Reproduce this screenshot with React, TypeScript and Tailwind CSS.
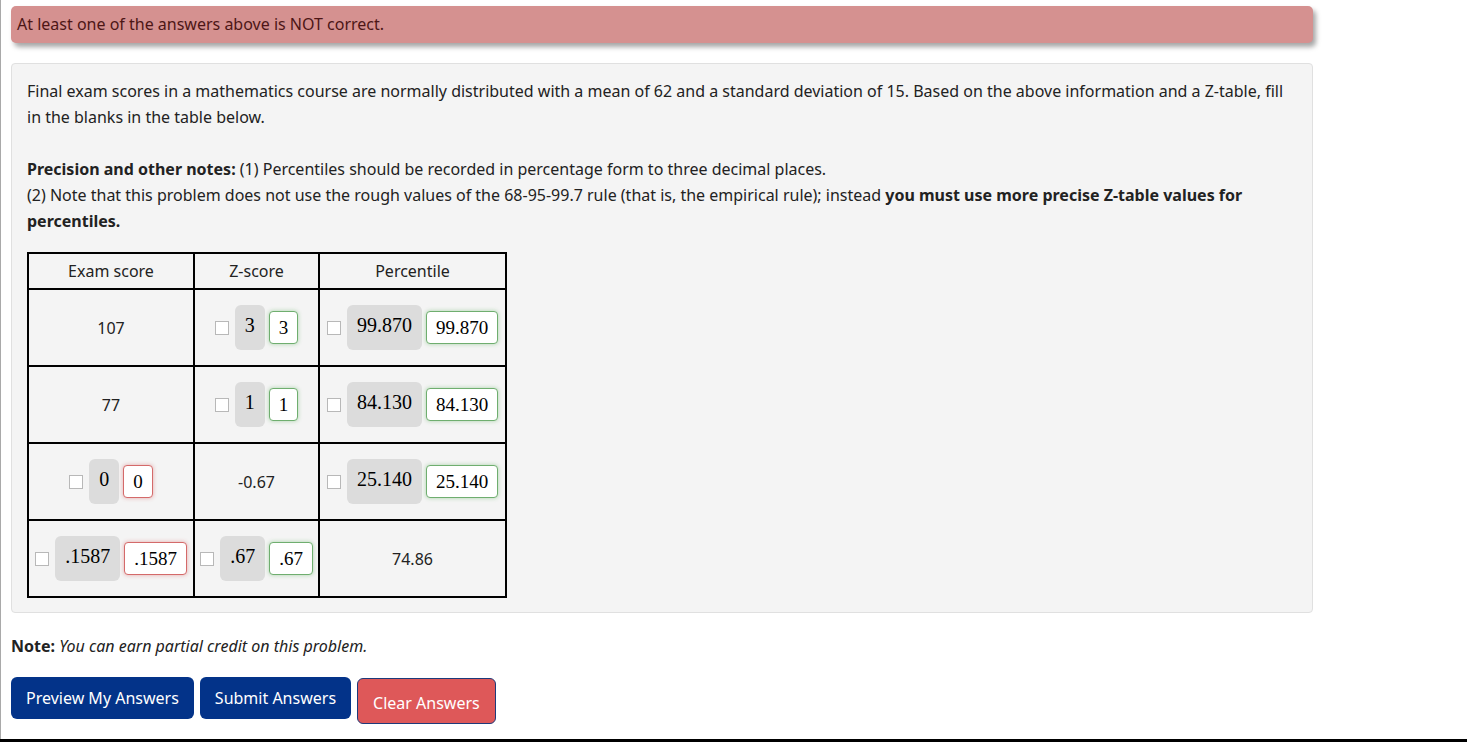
import React from "react";

const Check = () => (
  <span className="inline-block w-[14px] h-[14px] border border-[#b8b8b8] bg-white shrink-0" />
);

const Math = ({ v }: { v: string }) => (
  <span className="inline-flex items-center justify-center h-[45px] px-[10px] rounded-[6px] bg-[#dcdcdc] text-[20px] leading-none text-black pb-[6px] [font-family:'Liberation_Serif',serif]">
    {v}
  </span>
);

const Input = ({ v, ok }: { v: string; ok: boolean }) => (
  <span
    className={
      "inline-flex items-center justify-center h-[33px] px-[9px] rounded-[4px] bg-white text-[19px] leading-none text-black [font-family:'Liberation_Serif',serif] border " +
      (ok
        ? "border-[#6fae6f] shadow-[0_0_4px_rgba(80,170,80,0.45)]"
        : "border-[#d46a6a] shadow-[0_0_4px_rgba(210,80,80,0.45)]")
    }
  >
    {v}
  </span>
);

const Ans = ({ v, ok }: { v: string; ok: boolean }) => (
  <div className="flex items-center justify-center">
    <Check />
    <span className="ml-[6px]">
      <Math v={v} />
    </span>
    <span className="ml-[4px]">
      <Input v={v} ok={ok} />
    </span>
  </div>
);

const Plain = ({ v }: { v: string }) => (
  <span className="text-[16px] text-[#222]">{v}</span>
);

export default function App() {
  const cell = "border-2 border-black text-center align-middle px-[4px]";
  return (
    <div className="w-[1467px] h-[742px] bg-white [font-family:'Noto_Sans',sans-serif] text-[#222] overflow-hidden">
      <div className="h-[739px] border-l border-[#a9a9a9] pl-[10px] pt-[6px]">
        <div className="w-[1302px] h-[37px] rounded-[5px] bg-[#d59190] text-[#4d1616] text-[16px] leading-[37px] pl-[6px] shadow-[3px_4px_5px_rgba(0,0,0,0.35)]">
          At least one of the answers above is NOT correct.
        </div>

        <div className="mt-[20px] w-[1302px] rounded-[4px] border border-[#e0e0e0] bg-[#f4f4f4] px-[15px] pt-[14px] pb-[14px] text-[16px] leading-[26px]">
          <p>
            Final exam scores in a mathematics course are normally distributed with a mean of 62 and a standard deviation of 15. Based on the above information and a Z-table, fill in the blanks in the table below.
          </p>
          <p className="mt-[26px]">
            <b>Precision and other notes:</b> (1) Percentiles should be recorded in percentage form to three decimal places.
            <br />
            (2) Note that this problem does not use the rough values of the 68-95-99.7 rule (that is, the empirical rule); instead{" "}
            <b>you must use more precise Z-table values for percentiles.</b>
          </p>

          <table className="mt-[18px] border-collapse">
            <tbody>
              <tr className="h-[36px]">
                <td className={cell + " w-[166px]"}><Plain v="Exam score" /></td>
                <td className={cell + " w-[125px]"}><Plain v="Z-score" /></td>
                <td className={cell + " w-[187px]"}><Plain v="Percentile" /></td>
              </tr>
              <tr className="h-[77px]">
                <td className={cell}><Plain v="107" /></td>
                <td className={cell}><Ans v="3" ok /></td>
                <td className={cell}><Ans v="99.870" ok /></td>
              </tr>
              <tr className="h-[77px]">
                <td className={cell}><Plain v="77" /></td>
                <td className={cell}><Ans v="1" ok /></td>
                <td className={cell}><Ans v="84.130" ok /></td>
              </tr>
              <tr className="h-[77px]">
                <td className={cell}><Ans v="0" ok={false} /></td>
                <td className={cell}><Plain v="-0.67" /></td>
                <td className={cell}><Ans v="25.140" ok /></td>
              </tr>
              <tr className="h-[77px]">
                <td className={cell}><Ans v=".1587" ok={false} /></td>
                <td className={cell}><Ans v=".67" ok /></td>
                <td className={cell}><Plain v="74.86" /></td>
              </tr>
            </tbody>
          </table>
        </div>

        <p className="mt-[20px] text-[16px] leading-[26px]">
          <b>Note:</b> <i>You can earn partial credit on this problem.</i>
        </p>

        <div className="mt-[18px] flex items-start gap-[6px]">
          <button className="h-[42px] px-[15px] rounded-[6px] bg-[#033389] text-white text-[16px]">
            Preview My Answers
          </button>
          <button className="h-[42px] px-[15px] rounded-[6px] bg-[#033389] text-white text-[16px]">
            Submit Answers
          </button>
          <button className="mt-[1px] h-[46px] px-[15px] pt-[3px] rounded-[6px] bg-[#de5859] border border-[#1e3a7a] text-white text-[16px]">
            Clear Answers
          </button>
        </div>
      </div>
      <div className="h-[3px] bg-black" />
    </div>
  );
}
